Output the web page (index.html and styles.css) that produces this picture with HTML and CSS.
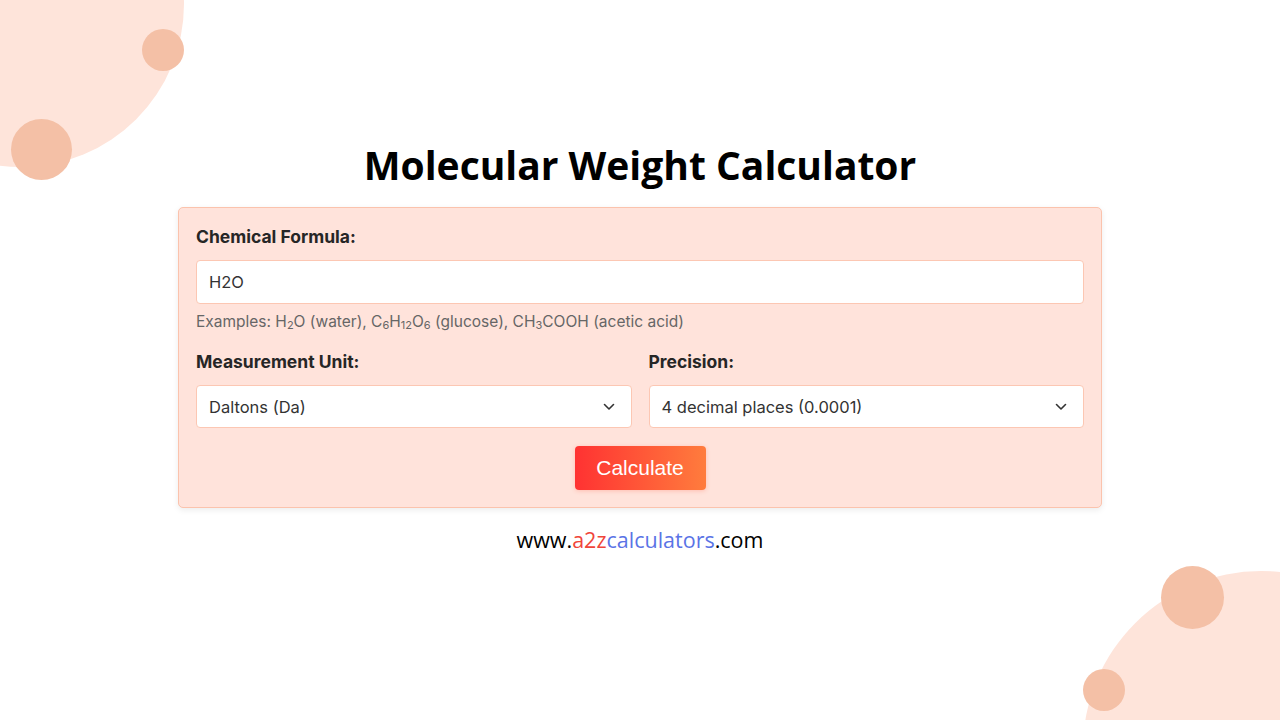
FILE: index.html
```html
<!DOCTYPE html>
<html lang="en">
<head>
<meta charset="utf-8">
<title>Molecular Weight Calculator</title>
<link rel="stylesheet" href="styles.css">
</head>
<body>
<div class="decor">
  <div class="deco deco-tl"></div>
  <div class="dot dot-tl1"></div>
  <div class="dot dot-tl2"></div>
  <div class="deco deco-br"></div>
  <div class="dot dot-br1"></div>
  <div class="dot dot-br2"></div>
</div>

<main class="page">
  <h1 class="title">Molecular Weight Calculator</h1>
  <section class="card">
    <div class="field">
      <label class="label">Chemical Formula:</label>
      <div class="input">H2O</div>
      <p class="hint">Examples: H<sub>2</sub>O (water), C<sub>6</sub>H<sub>12</sub>O<sub>6</sub> (glucose), CH<sub>3</sub>COOH (acetic acid)</p>
    </div>
    <div class="row">
      <div class="col">
        <label class="label">Measurement Unit:</label>
        <div class="select"><span>Daltons (Da)</span>
          <svg class="chev" width="12" height="8" viewBox="0 0 12 8"><path d="M1.5 1.5 L6 6 L10.5 1.5" fill="none" stroke="#333" stroke-width="1.6" stroke-linecap="round" stroke-linejoin="round"/></svg>
        </div>
      </div>
      <div class="col">
        <label class="label">Precision:</label>
        <div class="select"><span>4 decimal places (0.0001)</span>
          <svg class="chev" width="12" height="8" viewBox="0 0 12 8"><path d="M1.5 1.5 L6 6 L10.5 1.5" fill="none" stroke="#333" stroke-width="1.6" stroke-linecap="round" stroke-linejoin="round"/></svg>
        </div>
      </div>
    </div>
    <div class="actions"><button class="btn">Calculate</button></div>
  </section>
  <p class="site">www.<span class="red">a2z</span><span class="blue">calculators</span>.com</p>
</main>
</body>
</html>
```
FILE: styles.css
```css
* { box-sizing: border-box; }
html, body { margin: 0; padding: 0; }
body {
  width: 1280px;
  height: 720px;
  overflow: hidden;
  background: #ffffff;
  position: relative;
  font-family: Inter, "Noto Sans", sans-serif;
}
.decor {
  position: absolute;
  inset: 0;
  overflow: hidden;
}
.deco, .dot {
  position: absolute;
  border-radius: 50%;
}
.deco { background: #fee4da; }
.dot { background: #f4c0a6; }
.deco-tl { left: -142px; top: -159px; width: 326px; height: 326px; }
.deco-br { left: 1083px; top: 571px; width: 356px; height: 356px; }
.dot-tl1 { left: 142px; top: 29px; width: 42px; height: 42px; }
.dot-tl2 { left: 11px; top: 119px; width: 61px; height: 61px; }
.dot-br1 { left: 1161px; top: 566px; width: 63px; height: 63px; }
.dot-br2 { left: 1083px; top: 669px; width: 42px; height: 42px; }

.page {
  position: relative;
  display: flex;
  flex-direction: column;
  align-items: center;
  padding-top: 140px;
}
.title {
  margin: 0;
  font-family: "Open Sans", sans-serif;
  font-weight: 700;
  font-size: 39px;
  line-height: 50px;
  color: #000;
}
.card {
  margin-top: 17px;
  width: 924px;
  background: #ffe3db;
  border: 1px solid #fbc3ad;
  border-radius: 5px;
  box-shadow: 0 2px 6px rgba(0,0,0,0.08);
  padding: 19px 17px 17px;
}
.label {
  display: block;
  font-weight: 700;
  font-size: 17.5px;
  line-height: 20px;
  color: #262626;
  margin-bottom: 13px;
}
.input, .select {
  height: 44px;
  background: #fff;
  border: 1px solid #fcc7b3;
  border-radius: 4px;
  padding: 0 12px;
  display: flex;
  align-items: center;
  font-size: 16.5px;
  color: #333;
}
.hint {
  margin: 8px 0 0;
  font-size: 15.5px;
  line-height: 20px;
  color: #666;
}
.hint sub { font-size: 11px; vertical-align: -2px; line-height: 0; }
.row {
  display: flex;
  gap: 17px;
  margin-top: 20px;
}
.col { flex: 1; }
.select { justify-content: space-between; height: 43px; }
.chev { margin-right: 4px; }
.actions {
  display: flex;
  justify-content: center;
  margin-top: 18px;
}
.btn {
  width: 131px;
  height: 44px;
  border: none;
  border-radius: 4px;
  background: linear-gradient(90deg, #ff3232 0%, #ff7c3d 100%);
  color: #fff;
  font-family: "Liberation Sans", Arial, sans-serif;
  font-size: 21px;
  box-shadow: 0 1px 4px rgba(255,80,50,0.25);
}
.site {
  margin: 18px 0 0;
  font-family: "Open Sans", sans-serif;
  font-size: 21.5px;
  line-height: 28px;
  color: #000;
}
.red { color: #f0453a; }
.blue { color: #5a73e6; }
```
